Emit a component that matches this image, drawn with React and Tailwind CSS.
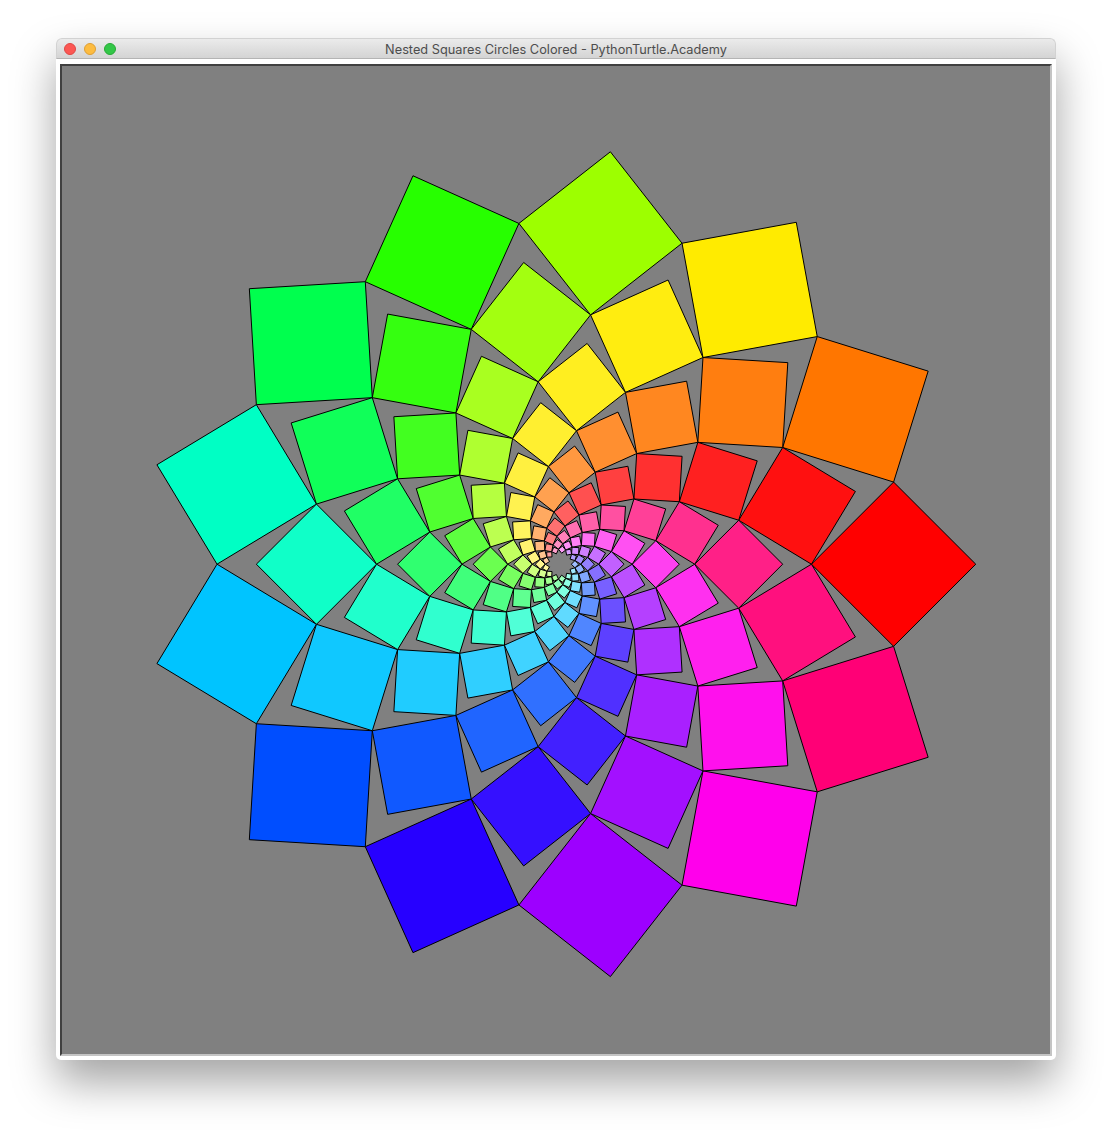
const STEP = 360 / 13;
const HALF = (STEP / 2) * (Math.PI / 180);
const SHRINK = (1 - Math.tan(HALF)) * Math.cos(HALF);
const CX = 498.3;
const CY = 498.2;

function hsvToCss(h, s) {
  const f = (n) => {
    const k = (n + h / 60) % 6;
    const v = 1 - s * Math.max(0, Math.min(k, 4 - k, 1));
    return Math.round(v * 255);
  };
  return `rgb(${f(5)},${f(3)},${f(1)})`;
}

function buildSquares() {
  const out = [];
  for (let ring = 0; ring < 11; ring++) {
    const R = 333.3 * Math.pow(SHRINK, ring);
    const h = R * Math.tan(HALF);
    for (let i = 0; i < 13; i++) {
      const deg = -(i * STEP) - (ring * STEP) / 2;
      const a = (deg * Math.PI) / 180;
      const ux = Math.cos(a);
      const uy = Math.sin(a);
      const mx = CX + R * ux;
      const my = CY + R * uy;
      const pts = [
        [mx - h * ux, my - h * uy],
        [mx - h * uy, my + h * ux],
        [mx + h * ux, my + h * uy],
        [mx + h * uy, my - h * ux],
      ]
        .map((p) => p.map((v) => v.toFixed(2)).join(","))
        .join(" ");
      out.push({ key: `${ring}-${i}`, pts, fill: hsvToCss(i * STEP, 1 - ring / 16) });
    }
  }
  return out;
}

const squares = buildSquares();

function Light({ className }) {
  return <span className={`block w-3 h-3 rounded-full ${className}`} />;
}

export default function App() {
  return (
    <div className="w-[1112px] h-[1134px] bg-white pt-[38px] pl-[56px] overflow-hidden">
      <div className="relative w-[1000px] h-[1022px] flex flex-col bg-white rounded-t-[6px] rounded-b-[5px] shadow-[0_22px_44px_0_rgba(0,0,0,0.36)]">
        <div className="relative h-[21px] flex items-center justify-center rounded-t-[6px] border border-[#d2d2d2] border-b-[#b4b4b4] bg-gradient-to-b from-[#ebebeb] to-[#d4d4d4]">
          <div className="absolute left-[7px] top-[4px] flex gap-2">
            <Light className="bg-[#fc5753] border border-[#df4744]" />
            <Light className="bg-[#fdbc40] border border-[#de9f34]" />
            <Light className="bg-[#33c748] border border-[#27aa35]" />
          </div>
          <span className="pt-[3px] text-[12.75px] leading-none text-[#4d4d4d] font-['Inter','Liberation_Sans',sans-serif]">
            Nested Squares Circles Colored - PythonTurtle.Academy
          </span>
        </div>
        <div className="pl-[4px] pt-[5px]">
          <div className="w-[992px] h-[992px] border-2 border-t-[#404040] border-l-[#404040] border-r-[#c4c4c4] border-b-[#c4c4c4] bg-[#808080]">
            <svg width="988" height="988" viewBox="0 0 988 988" className="block">
              {squares.map((s) => (
                <polygon key={s.key} points={s.pts} fill={s.fill} stroke="#000" strokeWidth="1" strokeLinejoin="miter" />
              ))}
            </svg>
          </div>
        </div>
      </div>
    </div>
  );
}
